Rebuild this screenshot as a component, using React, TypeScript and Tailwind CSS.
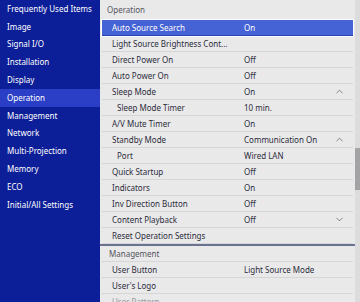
import { ChevronUp, ChevronDown } from 'lucide-react';

const sideItems = [
  'Frequently Used Items',
  'Image',
  'Signal I/O',
  'Installation',
  'Display',
  'Operation',
  'Management',
  'Network',
  'Multi-Projection',
  'Memory',
  'ECO',
  'Initial/All Settings',
];

type Row = { label: string; value?: string; sub?: boolean; arrow?: 'up' | 'down'; active?: boolean; faded?: boolean };

const opRows: Row[] = [
  { label: 'Auto Source Search', value: 'On', active: true },
  { label: 'Light Source Brightness Cont...' },
  { label: 'Direct Power On', value: 'Off' },
  { label: 'Auto Power On', value: 'Off' },
  { label: 'Sleep Mode', value: 'On', arrow: 'up' },
  { label: 'Sleep Mode Timer', value: '10 min.', sub: true },
  { label: 'A/V Mute Timer', value: 'On' },
  { label: 'Standby Mode', value: 'Communication On', arrow: 'up' },
  { label: 'Port', value: 'Wired LAN', sub: true },
  { label: 'Quick Startup', value: 'Off' },
  { label: 'Indicators', value: 'On' },
  { label: 'Inv Direction Button', value: 'Off' },
  { label: 'Content Playback', value: 'Off', arrow: 'down' },
  { label: 'Reset Operation Settings' },
];

const mgmtRows: Row[] = [
  { label: 'User Button', value: 'Light Source Mode' },
  { label: "User's Logo" },
  { label: 'User Pattern', faded: true },
];

const MenuRow = ({ row }: { row: Row }) => (
  <div
    className={`h-[16px] flex items-center border-b shrink-0 mx-[2px] whitespace-nowrap ${
      row.active
        ? 'bg-[#4563d4] text-white border-[#2a44b8] outline outline-1 outline-white'
        : row.faded
          ? 'border-[#d6d6d8] text-[#9a9aa2]'
          : 'border-[#d6d6d8] text-[#2c2c3a]'
    }`}
  >
    <span className={`w-[142px] truncate ${row.sub ? 'pl-[15px]' : 'pl-[10px]'}`}>{row.label}</span>
    <span className="flex-1">{row.value}</span>
    {row.arrow === 'up' && <ChevronUp size={11} strokeWidth={1.5} className="mr-[8px] text-[#555]" />}
    {row.arrow === 'down' && <ChevronDown size={11} strokeWidth={1.5} className="mr-[8px] text-[#555]" />}
  </div>
);

const App = () => {
  return (
    <div
      className="w-[360px] h-[302px] flex overflow-hidden text-[8px] bg-[#e9e9ea]"
      style={{ fontFamily: '"Noto Sans", "Open Sans", sans-serif' }}
    >
      {/* Sidebar */}
      <div className="w-[100px] h-full bg-[#0c1e98] flex flex-col text-white shrink-0">
        {sideItems.map((s) => (
          <div
            key={s}
            className={`h-[17.8px] flex items-center pl-[7px] shrink-0 whitespace-nowrap ${
              s === 'Operation' ? 'bg-[#2a3fc6]' : ''
            }`}
          >
            {s}
          </div>
        ))}
      </div>

      {/* Panel */}
      <div className="flex-1 flex h-full">
        <div className="flex-1 flex flex-col">
          <div className="h-[20px] flex items-center pl-[7px] text-[#555560] shrink-0">Operation</div>
          {opRows.map((r) => (
            <MenuRow key={r.label} row={r} />
          ))}
          <div className="h-[2px] bg-[#6b7290] shrink-0" />
          <div className="h-[16px] flex items-center pl-[7px] text-[#555560] border-b border-[#d6d6d8] mx-[2px] shrink-0">
            Management
          </div>
          {mgmtRows.map((r) => (
            <MenuRow key={r.label} row={r} />
          ))}
        </div>
        {/* Scrollbar */}
        <div className="w-[5px] h-full bg-[#dcdcdd] flex flex-col">
          <div className="h-[148px]" />
          <div className="h-[42px] bg-[#a3a3a6]" />
        </div>
      </div>
    </div>
  );
};

export default App;
